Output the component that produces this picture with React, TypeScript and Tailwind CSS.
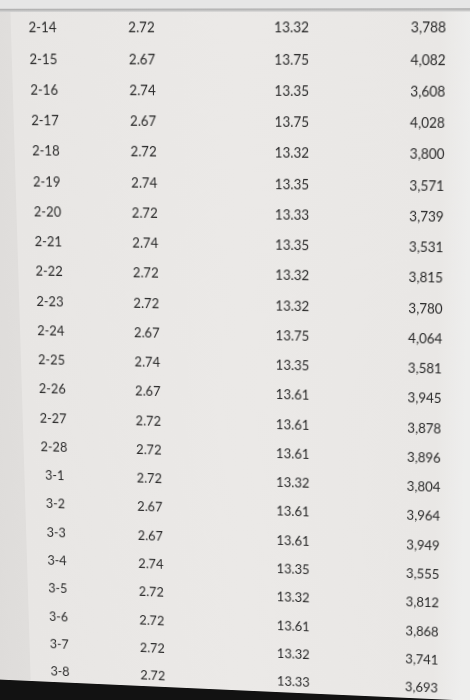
const rows: [string, string, string, string][] = [
  ["2-14", "2.72", "13.32", "3,788"],
  ["2-15", "2.67", "13.75", "4,082"],
  ["2-16", "2.74", "13.35", "3,608"],
  ["2-17", "2.67", "13.75", "4,028"],
  ["2-18", "2.72", "13.32", "3,800"],
  ["2-19", "2.74", "13.35", "3,571"],
  ["2-20", "2.72", "13.33", "3,739"],
  ["2-21", "2.74", "13.35", "3,531"],
  ["2-22", "2.72", "13.32", "3,815"],
  ["2-23", "2.72", "13.32", "3,780"],
  ["2-24", "2.67", "13.75", "4,064"],
  ["2-25", "2.74", "13.35", "3,581"],
  ["2-26", "2.67", "13.61", "3,945"],
  ["2-27", "2.72", "13.61", "3,878"],
  ["2-28", "2.72", "13.61", "3,896"],
  ["3-1", "2.72", "13.32", "3,804"],
  ["3-2", "2.67", "13.61", "3,964"],
  ["3-3", "2.67", "13.61", "3,949"],
  ["3-4", "2.74", "13.35", "3,555"],
  ["3-5", "2.72", "13.32", "3,812"],
  ["3-6", "2.72", "13.61", "3,868"],
  ["3-7", "2.72", "13.32", "3,741"],
  ["3-8", "2.72", "13.33", "3,693"],
];

export default function App() {
  return (
    <div className="relative h-[700px] w-[470px] overflow-hidden bg-[#121212]">
      {/* photo of a screen: the sheet is seen at a slight angle */}
      <div className="-ml-[60px] h-[700px] w-[600px] origin-[60px_0px] [transform:matrix3d(0.971351,-0.0018769,0,-0.000067034,0.033445,1.070279,0,0.000104468,0,0,1,0,0.28434,-1.8859,0,1)]">
        <div className="h-[683px] bg-[linear-gradient(to_right,#dcdad8_0px,#e0dedc_70px,#e8e6e4_70px,#ebe9e7_300px,#e9e7e5_500px,#eeeeed_530px)]">
          <div className="h-[10px] bg-[#e6e6e6]" />
          <div className="h-[3px] bg-[linear-gradient(to_bottom,#a8a8a8,#d6d6d6)]" />
          <div
            className="ml-[60px] pt-[0.36px] text-[13.5px] text-[#2a2a2a]"
            style={{ fontFamily: "Lato, 'Liberation Sans', sans-serif" }}
          >
            {rows.map((r) => (
              <div
                key={r[0]}
                className="grid h-[29.2727px] grid-cols-[85px_116.88px_183.86px_85.52px] items-center leading-none"
              >
                {r.map((c, i) => (
                  <span key={i} className="text-center">
                    {c}
                  </span>
                ))}
              </div>
            ))}
          </div>
        </div>
      </div>
    </div>
  );
}
